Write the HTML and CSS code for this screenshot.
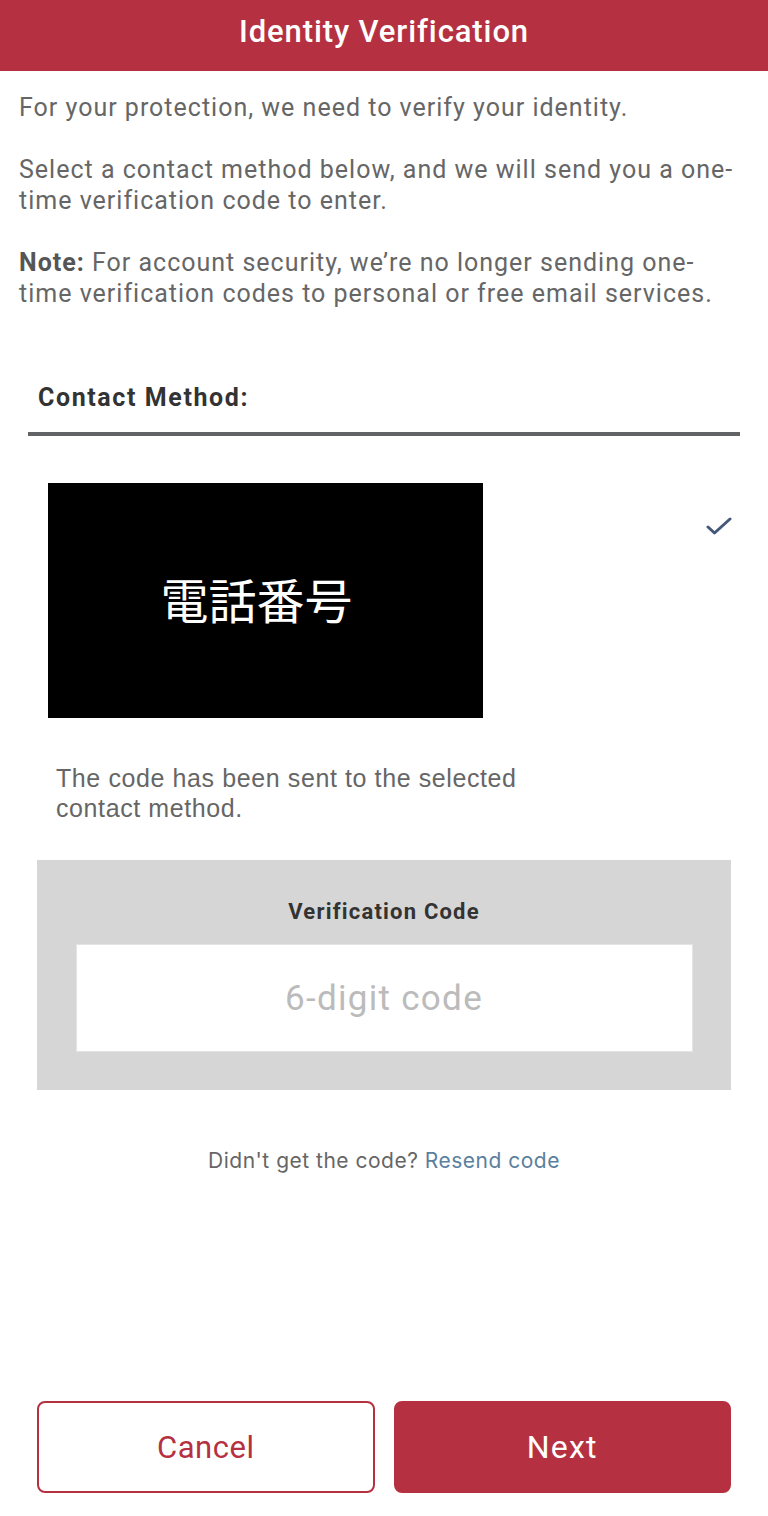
FILE: index.html
```html
<!DOCTYPE html>
<html lang="en">
<head>
<meta charset="utf-8">
<title>Identity Verification</title>
<link rel="stylesheet" href="styles.css">
</head>
<body>
<header class="topbar"><h1 class="title">Identity Verification</h1></header>
<main class="content">
  <section class="intro">
    <p>For your protection, we need to verify your identity.</p>
    <p>Select a contact method below, and we will send you a one-time verification code to enter.</p>
    <p><strong>Note:</strong> For account security, we’re no longer sending one-time verification codes to personal or free email services.</p>
  </section>
  <section class="method">
    <h2 class="method-label">Contact Method:</h2>
    <div class="divider"></div>
    <div class="option">
      <div class="masked"><span>電話番号</span></div>
      <svg class="check" width="26" height="20" viewBox="0 0 26 20"><path d="M2 11 L8.5 17 L24 3" fill="none" stroke="#44597a" stroke-width="3" stroke-linecap="round" stroke-linejoin="round"/></svg>
    </div>
    <p class="sent">The code has been sent to the selected contact method.</p>
  </section>
  <section class="codebox">
    <div class="code-label">Verification Code</div>
    <input class="code-input" type="text" placeholder="6-digit code">
  </section>
  <p class="resend">Didn't get the code? <a href="#">Resend code</a></p>
</main>
<footer class="actions">
  <button class="btn btn-cancel">Cancel</button>
  <button class="btn btn-next">Next</button>
</footer>
</body>
</html>
```
FILE: styles.css
```css
* { box-sizing: border-box; }
html, body { margin: 0; padding: 0; }
body {
  width: 768px;
  height: 1516px;
  font-family: Roboto, "Noto Sans CJK JP", sans-serif;
  background: #fff;
  display: flex;
  flex-direction: column;
}
.topbar {
  height: 71px;
  background: #b53141;
  display: flex;
  align-items: center;
  justify-content: center;
}
.title {
  margin: 0 0 9px 0;
  color: #fff;
  font-size: 31px;
  font-weight: 500;
  letter-spacing: 0.9px;
}
.content { flex: 1; display: flex; flex-direction: column; }
.intro { padding: 21px 28px 0 19px; }
.intro p {
  margin: 0 0 31px 0;
  font-size: 25px;
  line-height: 31px;
  letter-spacing: 1px;
  color: #666;
}
.intro p strong { font-weight: 700; color: #555; }
.method { padding: 43px 28px 0 28px; }
.method-label {
  margin: 0 0 0 10px;
  font-size: 25px;
  line-height: 30px;
  font-weight: 700;
  letter-spacing: 1.6px;
  color: #333;
}
.divider {
  margin-top: 19px;
  height: 4px;
  background: #626366;
}
.option {
  display: flex;
  justify-content: space-between;
  align-items: flex-start;
  padding: 47px 8px 0 20px;
}
.masked {
  width: 435px;
  height: 235px;
  background: #000;
  display: flex;
  align-items: center;
  justify-content: center;
}
.masked span {
  color: #fff;
  font-size: 48px;
  font-family: "Noto Sans CJK JP", sans-serif;
  font-weight: 400;
  margin-left: -18px;
  margin-top: -6px;
}
.check { margin-top: 33px; }
.sent {
  margin: 45px 0 0 28px;
  width: 475px;
  font-family: "Liberation Sans", Arial, sans-serif;
  font-size: 25px;
  line-height: 30px;
  letter-spacing: 0.6px;
  color: #666;
}
.codebox {
  margin: 37px 37px 0 37px;
  height: 230px;
  background: #d6d6d6;
  display: flex;
  flex-direction: column;
  align-items: center;
  padding-top: 39px;
}
.code-label {
  font-size: 22px;
  line-height: 26px;
  font-weight: 700;
  letter-spacing: 1.2px;
  color: #333;
}
.code-input {
  margin-top: 19px;
  width: 617px;
  height: 108px;
  border: 1px solid #e4e4e4;
  background: #fff;
  text-align: center;
  font-family: Roboto, sans-serif;
  font-size: 35px;
  letter-spacing: 1.3px;
  color: #333;
  outline: none;
}
.code-input::placeholder { color: #bbb; }
.resend {
  margin: 58px 0 0 0;
  text-align: center;
  font-family: Inter, sans-serif;
  font-size: 21px;
  line-height: 26px;
  letter-spacing: 0.5px;
  color: #666;
}
.resend a { color: #5b7f9e; text-decoration: none; }
.actions {
  display: flex;
  gap: 19px;
  padding: 0 37px 23px 37px;
}
.btn {
  flex: 1;
  height: 92px;
  border-radius: 8px;
  font-family: Roboto, sans-serif;
  font-size: 31px;
  letter-spacing: 0.5px;
  cursor: pointer;
}
.btn-cancel {
  background: #fff;
  border: 2px solid #b53141;
  color: #b53141;
}
.btn-next {
  background: #b53141;
  border: 2px solid #b53141;
  color: #fff;
  font-size: 32px;
  letter-spacing: 1.2px;
}
```
